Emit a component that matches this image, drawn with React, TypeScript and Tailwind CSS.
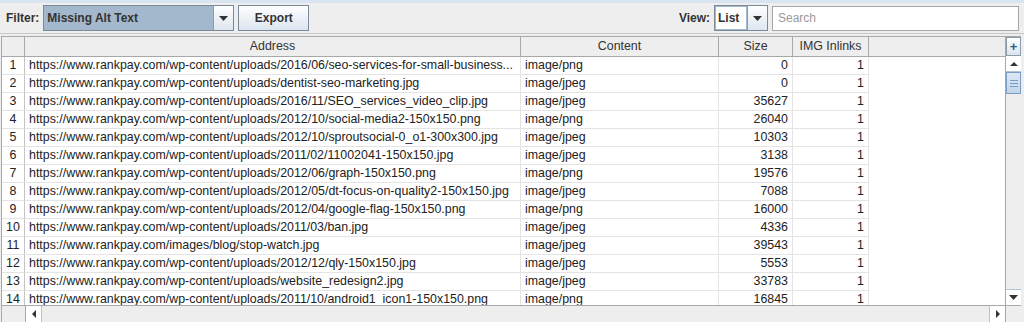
import { useState } from 'react'

type Row = { address: string; content: string; size: number; inlinks: number }

const rows: Row[] = [
    { address: 'https://www.rankpay.com/wp-content/uploads/2016/06/seo-services-for-small-business...', content: 'image/png', size: 0, inlinks: 1 },
    { address: 'https://www.rankpay.com/wp-content/uploads/dentist-seo-marketing.jpg', content: 'image/jpeg', size: 0, inlinks: 1 },
    { address: 'https://www.rankpay.com/wp-content/uploads/2016/11/SEO_services_video_clip.jpg', content: 'image/jpeg', size: 35627, inlinks: 1 },
    { address: 'https://www.rankpay.com/wp-content/uploads/2012/10/social-media2-150x150.png', content: 'image/png', size: 26040, inlinks: 1 },
    { address: 'https://www.rankpay.com/wp-content/uploads/2012/10/sproutsocial-0_o1-300x300.jpg', content: 'image/jpeg', size: 10303, inlinks: 1 },
    { address: 'https://www.rankpay.com/wp-content/uploads/2011/02/11002041-150x150.jpg', content: 'image/jpeg', size: 3138, inlinks: 1 },
    { address: 'https://www.rankpay.com/wp-content/uploads/2012/06/graph-150x150.png', content: 'image/png', size: 19576, inlinks: 1 },
    { address: 'https://www.rankpay.com/wp-content/uploads/2012/05/dt-focus-on-quality2-150x150.jpg', content: 'image/jpeg', size: 7088, inlinks: 1 },
    { address: 'https://www.rankpay.com/wp-content/uploads/2012/04/google-flag-150x150.png', content: 'image/png', size: 16000, inlinks: 1 },
    { address: 'https://www.rankpay.com/wp-content/uploads/2011/03/ban.jpg', content: 'image/jpeg', size: 4336, inlinks: 1 },
    { address: 'https://www.rankpay.com/images/blog/stop-watch.jpg', content: 'image/jpeg', size: 39543, inlinks: 1 },
    { address: 'https://www.rankpay.com/wp-content/uploads/2012/12/qly-150x150.jpg', content: 'image/jpeg', size: 5553, inlinks: 1 },
    { address: 'https://www.rankpay.com/wp-content/uploads/website_redesign2.jpg', content: 'image/jpeg', size: 33783, inlinks: 1 },
    { address: 'https://www.rankpay.com/wp-content/uploads/2011/10/android1_icon1-150x150.png', content: 'image/png', size: 16845, inlinks: 1 },
]

function DownArrow() {
    return (
        <svg width="9" height="5" viewBox="0 0 9 5">
            <path d="M0 0 H9 L4.5 5 Z" fill="#333" />
        </svg>
    )
}

function ArrowButton() {
    return (
        <div className="w-[20px] self-stretch flex items-center justify-center border-l border-[#8c9cac] bg-gradient-to-b from-white to-[#dde6ef]">
            <DownArrow />
        </div>
    )
}

function Toolbar() {
    return (
        <div className="h-[31px] flex items-center pl-[6px] pr-[5px] gap-[4px] border-b border-[#c8c8c8]">
            <span className="font-bold text-[#333]">Filter:</span>
            <div className="h-[26px] w-[191px] flex border border-[#7a8a99]">
                <div className="flex-1 bg-[#a3b8cc] flex items-center px-[3px] font-bold text-[#333]">Missing Alt Text</div>
                <ArrowButton />
            </div>
            <button className="h-[26px] w-[71px] border border-[#7a8a99] bg-gradient-to-b from-white to-[#dbe5ef] font-bold text-[#333]">
                Export
            </button>
            <div className="flex-1" />
            <span className="font-bold text-[#333]">View:</span>
            <div className="h-[26px] w-[54px] flex border border-[#7a8a99] bg-white">
                <div className="flex-1 flex items-center px-[2px] font-bold text-[#333] border border-[#a3b8cc]">List</div>
                <ArrowButton />
            </div>
            <input
                placeholder="Search"
                className="h-[25px] w-[247px] border border-[#a6a6a6] bg-white px-[5px] text-[#333] placeholder:text-[#9a9a9a] outline-none"
            />
        </div>
    )
}

const cols = 'grid grid-cols-[23px_496px_198px_74px_76px]'

function Header() {
    const cell = 'h-[19px] flex items-center justify-center border-r border-[#a8a8a8] text-[#333]'
    return (
        <div className={`${cols} bg-[#eeeeee] border-b border-[#a8a8a8]`}>
            <div className={cell} />
            <div className={cell}>Address</div>
            <div className={cell}>Content</div>
            <div className={cell}>Size</div>
            <div className={cell}>IMG Inlinks</div>
        </div>
    )
}

function TableRow({ row, index }: { row: Row; index: number }) {
    const cell = 'h-[18px] flex items-center border-r border-b border-[#e4e4e4] whitespace-nowrap overflow-hidden'
    return (
        <div className={`${cols} bg-white text-[#222]`}>
            <div className={`${cell} justify-center border-r-[#c4c4c4]`}>{index + 1}</div>
            <div className={`${cell} px-[4px]`}>{row.address}</div>
            <div className={`${cell} px-[4px]`}>{row.content}</div>
            <div className={`${cell} justify-end px-[4px]`}>{row.size}</div>
            <div className={`${cell} justify-end px-[4px]`}>{row.inlinks}</div>
        </div>
    )
}

function VScrollbar() {
    return (
        <div className="w-[16px] flex flex-col border-l border-[#a8a8a8] bg-[#eeeeee]">
            <div className="h-[19px] flex items-center justify-center border border-[#8c9cac] bg-gradient-to-b from-white to-[#dbe5ef] font-bold text-[13px] leading-none">
                <span className="text-[#2d5a8c]">+</span>
            </div>
            <div className="h-[16px] flex items-center justify-center border-b border-[#b8c4d0] bg-white">
                <svg width="8" height="4" viewBox="0 0 8 4"><path d="M0 4 H8 L4 0 Z" fill="#333" /></svg>
            </div>
            <div className="h-[22px] flex flex-col items-center justify-center gap-[2px] border border-[#7a9cc6] bg-gradient-to-b from-[#dde8f5] to-[#c3d5ea]">
                <div className="w-[8px] h-[1px] bg-[#7a9cc6]" />
                <div className="w-[8px] h-[1px] bg-[#7a9cc6]" />
                <div className="w-[8px] h-[1px] bg-[#7a9cc6]" />
            </div>
            <div className="flex-1" />
            <div className="h-[16px] flex items-center justify-center border-t border-[#b8c4d0] bg-white">
                <DownArrow />
            </div>
        </div>
    )
}

function HScrollbar() {
    return (
        <div className="h-[17px] flex border-t border-[#a8a8a8]">
            <div className="w-[23px] bg-[#eeeeee]" />
            <div className="flex-1 flex bg-[#eeeeee] border-l border-[#a8a8a8]">
                <div className="w-[16px] flex items-center justify-center bg-white border-r border-[#b8c4d0]">
                    <svg width="4" height="8" viewBox="0 0 4 8"><path d="M4 0 V8 L0 4 Z" fill="#333" /></svg>
                </div>
                <div className="flex-1" />
                <div className="w-[16px] flex items-center justify-center bg-white border-l border-[#b8c4d0]">
                    <svg width="4" height="8" viewBox="0 0 4 8"><path d="M0 0 V8 L4 4 Z" fill="#333" /></svg>
                </div>
            </div>
            <div className="w-[16px] bg-[#eeeeee] border-l border-[#a8a8a8]" />
        </div>
    )
}

export default function App() {
    const [data] = useState(rows)
    return (
        <div className="w-[1024px] h-[322px] flex flex-col bg-[#eeeeee] text-[12px] overflow-hidden font-['Liberation_Sans',Arial,sans-serif]">
            <div className="h-[3px] bg-[#d8e4f0]" />
            <Toolbar />
            <div className="flex-1 min-h-0 flex flex-col ml-[1px] mr-[3px] mt-[2px] border-l border-t border-[#a8a8a8] text-[12.4px]">
                <div className="flex-1 min-h-0 flex">
                    <div className="flex-1 min-w-0 overflow-hidden">
                        <Header />
                        {data.map((row, i) => (
                            <TableRow key={i} row={row} index={i} />
                        ))}
                    </div>
                    <VScrollbar />
                </div>
                <HScrollbar />
            </div>
        </div>
    )
}
